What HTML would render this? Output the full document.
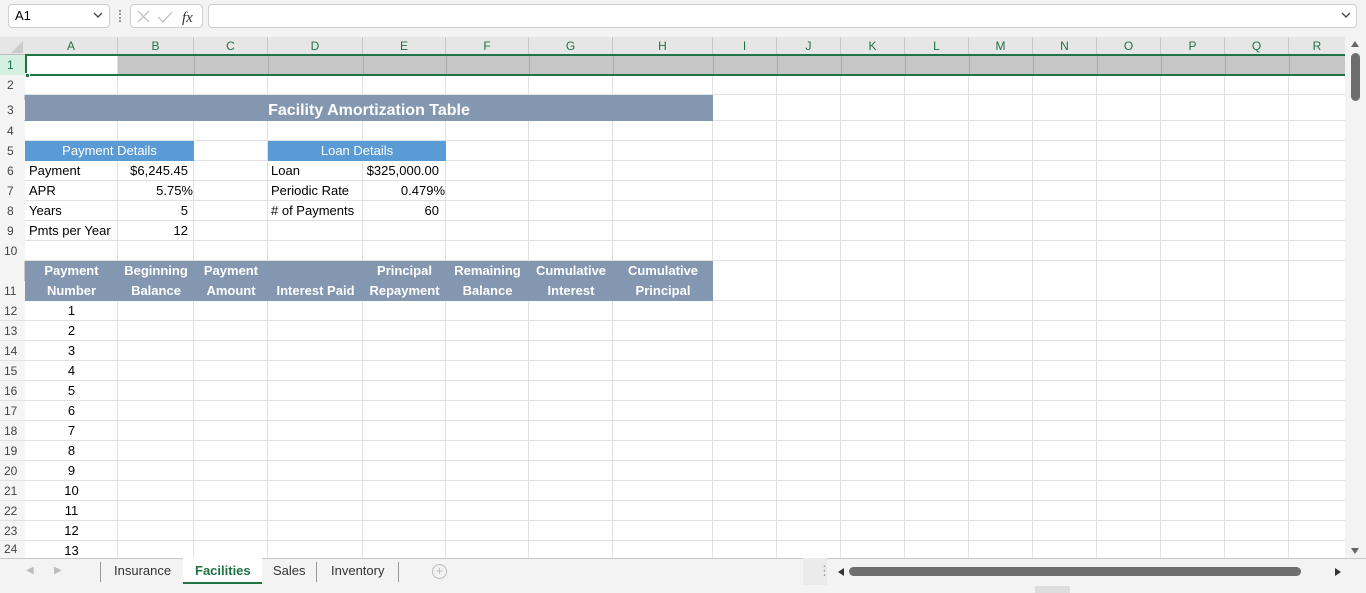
<!DOCTYPE html><html><head><meta charset="utf-8"><style>
*{margin:0;padding:0;box-sizing:border-box}
body{width:1366px;height:593px;overflow:hidden;background:#fff;font-family:"Liberation Sans",sans-serif;font-size:13px;color:#000;position:relative}
.a{position:absolute}
.vl{position:absolute;top:55px;height:503px;width:1px;background:#e1e1e1}
.hl{position:absolute;left:25px;width:1320px;height:1px;background:#e1e1e1}
.rh{position:absolute;left:0;width:25px;text-align:left;padding-left:7px;color:#444;font-size:12px;background:#f5f5f5}
.ch{position:absolute;top:37px;height:18px;line-height:18px;text-align:center;color:#217346;font-size:12px;border-right:1px solid #c8c8c8}
.t{position:absolute;line-height:20px;white-space:nowrap}
.w{color:#fff;font-weight:bold;text-align:center;line-height:20px}
</style></head><body>
<div class="a" style="left:0;top:0;width:1366px;height:37px;background:#f3f3f3"></div>
<div class="a" style="left:8px;top:4px;width:102px;height:24px;background:#fff;border:1px solid #d0d0d0;border-radius:4px"></div>
<div class="t" style="left:15px;top:6px;font-size:13px">A1</div>
<svg class="a" style="left:93px;top:12px" width="10" height="7"><path d="M1 1L5 5L9 1" fill="none" stroke="#444" stroke-width="1.3"/></svg>
<div class="a" style="left:119px;top:10px;width:2px;height:12px;border-left:2px dotted #999"></div>
<div class="a" style="left:130px;top:4px;width:73px;height:24px;background:#fff;border:1px solid #d0d0d0;border-radius:4px"></div>
<svg class="a" style="left:136px;top:9px" width="60" height="16"><path d="M2 2L13 13M13 2L2 13" stroke="#bbb" stroke-width="1.2"/><path d="M22 8L27 13L36 3" fill="none" stroke="#bbb" stroke-width="1.2"/><text x="46" y="13" font-family="Liberation Serif" font-style="italic" font-size="15" fill="#333">fx</text></svg>
<div class="a" style="left:208px;top:4px;width:1149px;height:24px;background:#fff;border:1px solid #d0d0d0;border-radius:4px"></div>
<svg class="a" style="left:1341px;top:12px" width="10" height="7"><path d="M1 1L5 5L9 1" fill="none" stroke="#444" stroke-width="1.3"/></svg>
<div class="a" style="left:0;top:37px;width:1345px;height:18px;background:#e6e6e6;border-bottom:1px solid #bbb"></div>
<svg class="a" style="left:10px;top:40px" width="14" height="14"><path d="M13 1L13 13L1 13Z" fill="#ccc"/></svg>
<div class="ch" style="left:25px;width:93px">A</div><div class="ch" style="left:118px;width:76px">B</div><div class="ch" style="left:194px;width:74px">C</div><div class="ch" style="left:268px;width:95px">D</div><div class="ch" style="left:363px;width:83px">E</div><div class="ch" style="left:446px;width:83px">F</div><div class="ch" style="left:529px;width:84px">G</div><div class="ch" style="left:613px;width:100px">H</div><div class="ch" style="left:713px;width:64px">I</div><div class="ch" style="left:777px;width:64px">J</div><div class="ch" style="left:841px;width:64px">K</div><div class="ch" style="left:905px;width:64px">L</div><div class="ch" style="left:969px;width:64px">M</div><div class="ch" style="left:1033px;width:64px">N</div><div class="ch" style="left:1097px;width:64px">O</div><div class="ch" style="left:1161px;width:64px">P</div><div class="ch" style="left:1225px;width:64px">Q</div><div class="ch" style="left:1289px;width:56px;border:0">R</div>
<div class="a" style="left:0;top:55px;width:25px;height:503px;background:#f5f5f5;border-right:1px solid #c8c8c8"></div>
<div class="rh" style="top:55px;height:20px;line-height:20px;background:#d3f0e0;color:#217346">1</div>
<div class="rh" style="top:75px;line-height:20px">2</div>
<div class="rh" style="top:100px;line-height:20px">3</div>
<div class="rh" style="top:121px;line-height:20px">4</div>
<div class="rh" style="top:141px;line-height:20px">5</div>
<div class="rh" style="top:161px;line-height:20px">6</div>
<div class="rh" style="top:181px;line-height:20px">7</div>
<div class="rh" style="top:201px;line-height:20px">8</div>
<div class="rh" style="top:221px;line-height:20px">9</div>
<div class="rh" style="top:241px;line-height:20px;padding-left:4px">10</div>
<div class="rh" style="top:281px;line-height:20px;padding-left:4px">11</div>
<div class="rh" style="top:301px;line-height:20px;padding-left:4px">12</div>
<div class="rh" style="top:321px;line-height:20px;padding-left:4px">13</div>
<div class="rh" style="top:341px;line-height:20px;padding-left:4px">14</div>
<div class="rh" style="top:361px;line-height:20px;padding-left:4px">15</div>
<div class="rh" style="top:381px;line-height:20px;padding-left:4px">16</div>
<div class="rh" style="top:401px;line-height:20px;padding-left:4px">17</div>
<div class="rh" style="top:421px;line-height:20px;padding-left:4px">18</div>
<div class="rh" style="top:441px;line-height:20px;padding-left:4px">19</div>
<div class="rh" style="top:461px;line-height:20px;padding-left:4px">20</div>
<div class="rh" style="top:481px;line-height:20px;padding-left:4px">21</div>
<div class="rh" style="top:501px;line-height:20px;padding-left:4px">22</div>
<div class="rh" style="top:521px;line-height:20px;padding-left:4px">23</div>
<div class="rh" style="top:541px;line-height:17px;padding-left:4px">24</div>
<div class="hl" style="top:94px"></div><div class="hl" style="top:120px"></div><div class="hl" style="top:140px"></div><div class="hl" style="top:160px"></div><div class="hl" style="top:180px"></div><div class="hl" style="top:200px"></div><div class="hl" style="top:220px"></div><div class="hl" style="top:240px"></div><div class="hl" style="top:260px"></div><div class="hl" style="top:300px"></div>
<div class="a" style="left:0;top:301px;width:1345px;height:257px;background:repeating-linear-gradient(#0000 0 19px,#e1e1e1 19px 20px)"></div>
<div class="vl" style="left:117px"></div><div class="vl" style="left:193px"></div><div class="vl" style="left:267px"></div><div class="vl" style="left:362px"></div><div class="vl" style="left:445px"></div><div class="vl" style="left:528px"></div><div class="vl" style="left:612px"></div><div class="vl" style="left:712px"></div><div class="vl" style="left:776px"></div><div class="vl" style="left:840px"></div><div class="vl" style="left:904px"></div><div class="vl" style="left:968px"></div><div class="vl" style="left:1032px"></div><div class="vl" style="left:1096px"></div><div class="vl" style="left:1160px"></div><div class="vl" style="left:1224px"></div><div class="vl" style="left:1288px"></div>
<div class="a" style="left:118px;top:56px;width:1227px;height:18px;background:#c6c6c6"></div>
<div class="a" style="left:194px;top:56px;width:1px;height:18px;background:#aaa;box-shadow:74px 0 #aaa,169px 0 #aaa,252px 0 #aaa,335px 0 #aaa,419px 0 #aaa,519px 0 #aaa,583px 0 #aaa,647px 0 #aaa,711px 0 #aaa,775px 0 #aaa,839px 0 #aaa,903px 0 #aaa,967px 0 #aaa,1031px 0 #aaa,1095px 0 #aaa"></div>
<div class="a" style="left:25px;top:54px;width:1320px;height:2px;background:#217346"></div>
<div class="a" style="left:25px;top:74px;width:1320px;height:2px;background:#217346"></div>
<div class="a" style="left:25px;top:54px;width:2px;height:22px;background:#217346"></div>
<div class="a" style="left:25px;top:73px;width:5px;height:5px;background:#217346;border:1px solid #fff"></div>
<div class="a w" style="left:25px;top:95px;width:688px;height:26px;background:#8497b0;font-size:16px;line-height:26px;padding-top:3px">Facility Amortization Table</div>
<div class="a w" style="left:25px;top:141px;width:169px;height:20px;background:#5b9bd5;font-weight:normal">Payment Details</div>
<div class="a w" style="left:268px;top:141px;width:178px;height:20px;background:#5b9bd5;font-weight:normal">Loan Details</div>
<div class="t" style="left:29px;top:161px">Payment</div><div class="t" style="left:118px;top:161px;width:70px;text-align:right">$6,245.45</div>
<div class="t" style="left:29px;top:181px">APR</div><div class="t" style="left:118px;top:181px;width:75px;text-align:right">5.75%</div>
<div class="t" style="left:29px;top:201px">Years</div><div class="t" style="left:118px;top:201px;width:70px;text-align:right">5</div>
<div class="t" style="left:29px;top:221px">Pmts per Year</div><div class="t" style="left:118px;top:221px;width:70px;text-align:right">12</div>
<div class="t" style="left:271px;top:161px">Loan</div><div class="t" style="left:363px;top:161px;width:76px;text-align:right">$325,000.00</div>
<div class="t" style="left:271px;top:181px">Periodic Rate</div><div class="t" style="left:363px;top:181px;width:82px;text-align:right">0.479%</div>
<div class="t" style="left:271px;top:201px"># of Payments</div><div class="t" style="left:363px;top:201px;width:76px;text-align:right">60</div>
<div class="a" style="left:25px;top:261px;width:688px;height:40px;background:#8497b0"></div>
<div class="a w" style="left:25px;top:261px;width:93px">Payment<br>Number</div>
<div class="a w" style="left:118px;top:261px;width:76px">Beginning<br>Balance</div>
<div class="a w" style="left:194px;top:261px;width:74px">Payment<br>Amount</div>
<div class="a w" style="left:268px;top:281px;width:95px">Interest Paid</div>
<div class="a w" style="left:363px;top:261px;width:83px">Principal<br>Repayment</div>
<div class="a w" style="left:446px;top:261px;width:83px">Remaining<br>Balance</div>
<div class="a w" style="left:529px;top:261px;width:84px">Cumulative<br>Interest</div>
<div class="a w" style="left:613px;top:261px;width:100px">Cumulative<br>Principal</div>
<div class="a" style="left:25px;top:301px;width:93px;text-align:center;line-height:20px">1<br>2<br>3<br>4<br>5<br>6<br>7<br>8<br>9<br>10<br>11<br>12<br>13</div>
<div class="a" style="left:1345px;top:37px;width:21px;height:521px;background:#f3f3f3"></div>
<svg class="a" style="left:1350px;top:40px" width="10" height="8"><path d="M1 7L5 1L9 7Z" fill="#666"/></svg>
<div class="a" style="left:1351px;top:53px;width:9px;height:48px;background:#6e6e6e;border-radius:5px"></div>
<svg class="a" style="left:1350px;top:547px" width="10" height="8"><path d="M1 1L5 7L9 1Z" fill="#666"/></svg>
<div class="a" style="left:0;top:558px;width:1366px;height:27px;background:#f3f3f3;border-top:1px solid #c8c8c8"></div>
<div class="a" style="left:0;top:585px;width:1366px;height:8px;background:#f3f3f3"></div>
<div class="t" style="left:26px;top:561px;color:#bbb;font-size:10px">◀</div>
<div class="t" style="left:54px;top:561px;color:#bbb;font-size:10px">▶</div>
<div class="a" style="left:100px;top:562px;width:1px;height:20px;background:#999"></div>
<div class="t" style="left:114px;top:561px;color:#333">Insurance</div>
<div class="a" style="left:183px;top:558px;width:79px;height:26px;background:#fff;border-bottom:2px solid #217346"></div>
<div class="t" style="left:195px;top:561px;color:#217346;font-weight:bold">Facilities</div>
<div class="t" style="left:273px;top:561px;color:#333">Sales</div>
<div class="a" style="left:316px;top:562px;width:1px;height:20px;background:#999"></div>
<div class="t" style="left:331px;top:561px;color:#333">Inventory</div>
<div class="a" style="left:398px;top:562px;width:1px;height:20px;background:#999"></div>
<div class="a" style="left:432px;top:564px;width:15px;height:15px;border:1px solid #bbb;border-radius:50%;color:#bbb;text-align:center;line-height:12px;font-size:13px">+</div>
<div class="a" style="left:803px;top:558px;width:24px;height:27px;background:#ebebeb"></div>
<div class="t" style="left:818px;top:561px;color:#999">⋮</div>
<svg class="a" style="left:837px;top:567px" width="8" height="10"><path d="M7 1L1 5L7 9Z" fill="#333"/></svg>
<div class="a" style="left:849px;top:567px;width:452px;height:9px;background:#6e6e6e;border-radius:5px"></div>
<svg class="a" style="left:1334px;top:567px" width="8" height="10"><path d="M1 1L7 5L1 9Z" fill="#333"/></svg>
<div class="a" style="left:1035px;top:586px;width:35px;height:7px;background:#ddd"></div>
</body></html>
